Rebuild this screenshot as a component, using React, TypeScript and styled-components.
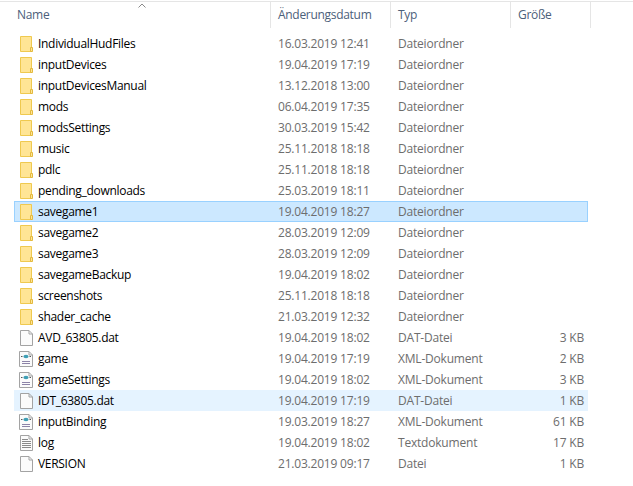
import styled, { createGlobalStyle } from "styled-components";

const GlobalStyle = createGlobalStyle`
  html, body {
    margin: 0;
    padding: 0;
    background: #fff;
    overflow: hidden;
  }
  body {
    font-family: "Open Sans", "Noto Sans", "Liberation Sans", sans-serif;
    font-size: 12px;
  }
`;

const Explorer = styled.div`
  width: 633px;
  height: 486px;
  display: flex;
  flex-direction: column;
  overflow: hidden;
`;

const Header = styled.div`
  position: relative;
  height: 26px;
  margin-top: 1px;
  border-top: 1px solid #e5e5e5;
  display: grid;
  grid-template-columns: 271px 120px 120px 80px;
  color: #4c607a;
`;

const HeaderCell = styled.div`
  border-right: 1px solid #e5e5e5;
  padding-left: 7px;
  line-height: 25px;
  letter-spacing: -0.3px;

  &:first-child {
    padding-left: 17px;
  }
`;

const SortCaret = styled.svg`
  position: absolute;
  left: 138px;
  top: 1px;
  width: 8px;
  height: 5px;
`;

const List = styled.div`
  margin: 5px 0 0 14px;
  width: 574px;
  display: flex;
  flex-direction: column;
`;

const Row = styled.div<{ $state?: "selected" | "hover" }>`
  box-sizing: border-box;
  height: 21px;
  display: grid;
  grid-template-columns: 257px 120px 120px 75px;
  align-items: center;
  background: ${(p) =>
    p.$state === "selected" ? "#cce8ff" : p.$state === "hover" ? "#e5f3ff" : "transparent"};
  border: 1px solid ${(p) => (p.$state === "selected" ? "#99d1ff" : "transparent")};
`;

const NameCell = styled.div`
  display: flex;
  align-items: center;
  gap: 4px;
  padding-left: 5px;
  color: #000;
  letter-spacing: -0.3px;
  white-space: nowrap;
`;

const InfoCell = styled.div`
  color: #6d6d6d;
  padding-left: 6px;
  letter-spacing: -0.2px;
  white-space: nowrap;
`;

const SizeCell = styled(InfoCell)`
  padding: 0 3px 0 0;
  text-align: right;
`;

const IconBox = styled.svg`
  flex: none;
  width: 14px;
  height: 16px;
  overflow: visible;
`;

type Kind = "folder" | "file" | "xml" | "text";

function FileIcon({ kind }: { kind: Kind }) {
  if (kind === "folder") {
    return (
      <IconBox viewBox="0 0 14 16">
        <path d="M.5 .5h11v15H.5z" fill="#ffe595" stroke="#efc94f" />
        <path d="M10.5 11.5h2v4h-2z" fill="#ffe595" stroke="#e3b93f" />
      </IconBox>
    );
  }
  if (kind === "xml") {
    return (
      <IconBox viewBox="0 0 14 16">
        <path d="M-.5 .5h9.5l3.5 3.5v11.5h-13z M9 .5V4h3.5" fill="#fbfbfb" stroke="#a3a3a3" />
        <ellipse cx="6" cy="5.5" rx="2.6" ry="1.8" fill="#3f9fb5" />
        <path d="M1 5.5h1.5M9.5 5.5H11" stroke="#555" />
        <path d="M2 10.5h8M2 12.5h8" stroke="#8d84a8" />
      </IconBox>
    );
  }
  const sheet = (
    <path d="M.5 .5h8.5l3.5 3.5v11.5H.5z M9 .5V4h3.5" fill="#fbfbfb" stroke="#a3a3a3" />
  );
  if (kind === "text") {
    return (
      <IconBox viewBox="0 0 14 16">
        {sheet}
        <path d="M2 4.5h6M2 6.5h9M2 8.5h9M2 10.5h9M2 12.5h9" stroke="#8a8a8a" />
      </IconBox>
    );
  }
  return <IconBox viewBox="0 0 14 16">{sheet}</IconBox>;
}

type Entry = {
  name: string;
  date: string;
  type: string;
  size?: string;
  kind: Kind;
  state?: "selected" | "hover";
};

const folder = (name: string, date: string, state?: "selected"): Entry => ({
  name,
  date,
  type: "Dateiordner",
  kind: "folder",
  state,
});

const entries: Entry[] = [
  folder("IndividualHudFiles", "16.03.2019 12:41"),
  folder("inputDevices", "19.04.2019 17:19"),
  folder("inputDevicesManual", "13.12.2018 13:00"),
  folder("mods", "06.04.2019 17:35"),
  folder("modsSettings", "30.03.2019 15:42"),
  folder("music", "25.11.2018 18:18"),
  folder("pdlc", "25.11.2018 18:18"),
  folder("pending_downloads", "25.03.2019 18:11"),
  folder("savegame1", "19.04.2019 18:27", "selected"),
  folder("savegame2", "28.03.2019 12:09"),
  folder("savegame3", "28.03.2019 12:09"),
  folder("savegameBackup", "19.04.2019 18:02"),
  folder("screenshots", "25.11.2018 18:18"),
  folder("shader_cache", "21.03.2019 12:32"),
  { name: "AVD_63805.dat", date: "19.04.2019 18:02", type: "DAT-Datei", size: "3 KB", kind: "file" },
  { name: "game", date: "19.04.2019 17:19", type: "XML-Dokument", size: "2 KB", kind: "xml" },
  { name: "gameSettings", date: "19.04.2019 18:02", type: "XML-Dokument", size: "3 KB", kind: "xml" },
  { name: "IDT_63805.dat", date: "19.04.2019 17:19", type: "DAT-Datei", size: "1 KB", kind: "file", state: "hover" },
  { name: "inputBinding", date: "19.03.2019 18:27", type: "XML-Dokument", size: "61 KB", kind: "xml" },
  { name: "log", date: "19.04.2019 18:02", type: "Textdokument", size: "17 KB", kind: "text" },
  { name: "VERSION", date: "21.03.2019 09:17", type: "Datei", size: "1 KB", kind: "file" },
];

export default function App() {
  return (
    <Explorer>
      <GlobalStyle />
      <Header>
        <HeaderCell>Name</HeaderCell>
        <HeaderCell>Änderungsdatum</HeaderCell>
        <HeaderCell>Typ</HeaderCell>
        <HeaderCell>Größe</HeaderCell>
        <SortCaret viewBox="0 0 8 5">
          <path d="M.5 4.5L4 1l3.5 3.5" fill="none" stroke="#8a8a8a" />
        </SortCaret>
      </Header>
      <List>
        {entries.map((e) => (
          <Row key={e.name} $state={e.state}>
            <NameCell>
              <FileIcon kind={e.kind} />
              {e.name}
            </NameCell>
            <InfoCell>{e.date}</InfoCell>
            <InfoCell>{e.type}</InfoCell>
            <SizeCell>{e.size}</SizeCell>
          </Row>
        ))}
      </List>
    </Explorer>
  );
}
